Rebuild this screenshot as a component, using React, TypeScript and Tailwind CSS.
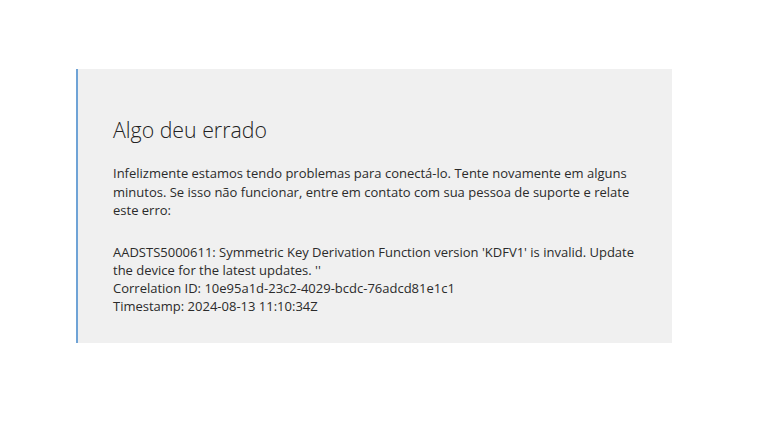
import React from "react";

const App: React.FC = () => {
  return (
    <div className="w-[768px] h-[433px] bg-white pt-[69px] pl-[76px]" style={{ fontFamily: '"Open Sans", "Noto Sans", sans-serif' }}>
      <div className="flex w-[596px] h-[274px]">
        <div className="w-[2px] bg-[#6fa3d6]" />
        <div className="flex-1 bg-[#f0f0f0] pl-[35px] pr-[24px] pt-[48px]">
          <h1 className="text-[21.3px] font-light text-[#222] leading-[26px]">Algo deu errado</h1>
          <p className="mt-[21px] text-[13px] leading-[18.5px] text-[#2b2b2b]">
            Infelizmente estamos tendo problemas para conectá-lo. Tente novamente em alguns minutos. Se isso não funcionar, entre em contato com sua pessoa de suporte e relate este erro:
          </p>
          <div className="mt-[23px] text-[13px] leading-[18px] text-[#2b2b2b]">
            <p>AADSTS5000611: Symmetric Key Derivation Function version 'KDFV1' is invalid. Update the device for the latest updates. ''</p>
            <p>Correlation ID: 10e95a1d-23c2-4029-bcdc-76adcd81e1c1</p>
            <p>Timestamp: 2024-08-13 11:10:34Z</p>
          </div>
        </div>
      </div>
    </div>
  );
};

export default App;
